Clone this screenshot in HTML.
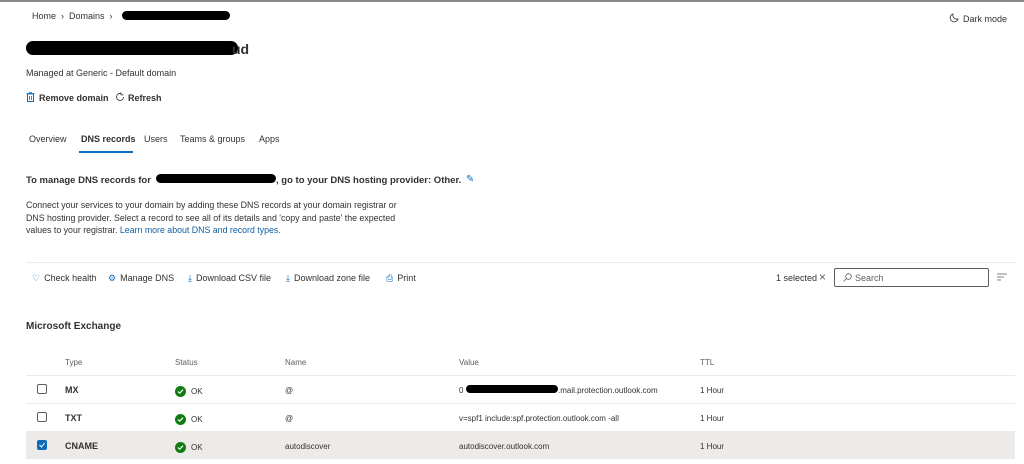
<!DOCTYPE html>
<html><head><meta charset="utf-8"><style>
*{margin:0;padding:0;box-sizing:border-box}
body{width:1024px;height:464px;overflow:hidden;background:#fff;font-family:"Liberation Sans",sans-serif;color:#323130;position:relative;font-size:9px}
.a{position:absolute;white-space:nowrap}
.blk{position:absolute;background:#000;border-radius:6px}
.hl{position:absolute;left:26px;width:989px;height:1px;background:#edebe9}
.cb{position:absolute;left:37px;width:10px;height:10px;border:1px solid #605e5c;border-radius:2px;background:#fff}
.ok{position:absolute;width:11px;height:11px;border-radius:50%;background:#107c10}
.ok svg{position:absolute;left:2px;top:2px}
.ic{color:#0f6cbd;margin-right:4px}
</style></head><body>
<div style="position:absolute;left:0;top:0;width:1024px;height:2px;background:#8a8886"></div>
<div class="a" style="left:32px;top:11px;font-size:9px;color:#323130">Home &nbsp;›&nbsp; Domains &nbsp;›</div>
<div class="blk" style="left:122px;top:11px;width:108px;height:9px"></div>
<div class="a" style="left:949px;top:13px;font-size:9px"><svg width="10" height="10" viewBox="0 0 10 10" style="vertical-align:-1px;margin-right:4px"><path d="M4 1a4 4 0 1 0 5 5A4 4 0 0 1 4 1z" fill="none" stroke="#323130" stroke-width="0.8"/></svg>Dark mode</div>
<div class="blk" style="left:26px;top:41px;width:212px;height:14px;border-radius:7px"></div>
<div class="a" style="left:232px;top:41px;font-size:14px;font-weight:bold">ud</div>
<div class="a" style="left:26px;top:68px;font-size:9px">Managed at Generic - Default domain</div>
<div class="a" style="left:26px;top:92px;font-size:9px;font-weight:bold"><svg width="9" height="10" viewBox="0 0 9 10" style="vertical-align:-1px;margin-right:4px"><rect x="1.5" y="2" width="6" height="7.5" fill="none" stroke="#0f6cbd"/><path d="M0.5 1.5h8M3 0.5h3M3.5 4v4M5.5 4v4" stroke="#0f6cbd" stroke-width="0.8"/></svg>Remove domain</div>
<div class="a" style="left:115px;top:92px;font-size:9px;font-weight:bold"><svg width="10" height="10" viewBox="0 0 10 10" style="vertical-align:-1px;margin-right:3px"><path d="M8.5 5A3.5 3.5 0 1 1 6 1.6" fill="none" stroke="#323130" stroke-width="0.8"/><path d="M6 0.3v2.6h2.5" fill="none" stroke="#323130" stroke-width="0.8"/></svg>Refresh</div>
<div class="a" style="left:29px;top:134px;font-size:9px">Overview</div>
<div class="a" style="left:81px;top:134px;font-size:9px;font-weight:bold">DNS records</div>
<div style="position:absolute;left:79px;top:151px;width:54px;height:2px;background:#0f6cbd"></div>
<div class="a" style="left:144px;top:134px;font-size:9px">Users</div>
<div class="a" style="left:180px;top:134px;font-size:9px">Teams &amp; groups</div>
<div class="a" style="left:259px;top:134px;font-size:9px">Apps</div>
<div class="a" style="left:26px;top:175px;font-size:9.5px;font-weight:bold">To manage DNS records for</div>
<div class="blk" style="left:156px;top:174px;width:120px;height:9px"></div>
<div class="a" style="left:276px;top:175px;font-size:9.5px;font-weight:bold">, go to your DNS hosting provider: Other.</div>
<div class="a" style="left:466px;top:174px;font-size:10px;color:#0f6cbd">✎</div>
<div class="a" style="left:26px;top:199px;font-size:8.8px;line-height:12.5px;color:#323130">Connect your services to your domain by adding these DNS records at your domain registrar or<br>DNS hosting provider. Select a record to see all of its details and 'copy and paste' the expected<br>values to your registrar. <span style="color:#115ea3">Learn more about DNS and record types.</span></div>
<div class="hl" style="top:262px"></div>
<div class="a" style="left:32px;top:273px;font-size:9px"><span class="ic">♡</span>Check health</div>
<div class="a" style="left:108px;top:273px;font-size:9px"><span class="ic">⚙</span>Manage DNS</div>
<div class="a" style="left:188px;top:273px;font-size:9px"><span class="ic">⤓</span>Download CSV file</div>
<div class="a" style="left:286px;top:273px;font-size:9px"><span class="ic">⤓</span>Download zone file</div>
<div class="a" style="left:386px;top:273px;font-size:9px"><span class="ic">⎙</span>Print</div>
<div class="a" style="left:776px;top:273px;font-size:9px">1 selected</div>
<div class="a" style="left:819px;top:270px;font-size:12px;color:#605e5c">×</div>
<div style="position:absolute;left:834px;top:268px;width:155px;height:19px;border:1px solid #605e5c;border-radius:2px"></div>
<div class="a" style="left:843px;top:273px;font-size:9px;color:#605e5c"><svg width="9" height="9" viewBox="0 0 9 9" style="vertical-align:-1px;margin-right:3px"><circle cx="5.5" cy="3.5" r="2.8" fill="none" stroke="#605e5c" stroke-width="0.8"/><path d="M3.5 5.5L0.5 8.5" stroke="#605e5c" stroke-width="0.8"/></svg>Search</div>
<svg class="a" style="left:997px;top:273px" width="10" height="8" viewBox="0 0 10 8"><path d="M0 1h10M0 4h7M0 7h4" stroke="#605e5c" stroke-width="0.8"/></svg>
<div class="a" style="left:26px;top:321px;font-size:10px;font-weight:bold">Microsoft Exchange</div>
<div class="a" style="left:65px;top:358px;font-size:8px;color:#605e5c">Type</div>
<div class="a" style="left:175px;top:358px;font-size:8px;color:#605e5c">Status</div>
<div class="a" style="left:285px;top:358px;font-size:8px;color:#605e5c">Name</div>
<div class="a" style="left:459px;top:358px;font-size:8px;color:#605e5c">Value</div>
<div class="a" style="left:700px;top:358px;font-size:8px;color:#605e5c">TTL</div>
<div class="hl" style="top:375px"></div>
<div class="hl" style="top:403px"></div>
<div style="position:absolute;left:26px;top:431px;width:989px;height:28px;background:#edebe9"></div>
<div class="cb" style="top:384px"></div>
<div class="cb" style="top:412px"></div>
<div class="cb" style="top:440px;background:#0f6cbd;border-color:#0f6cbd"><svg width="8" height="8" viewBox="0 0 8 8" style="position:absolute;left:0;top:0"><path d="M1.5 4l2 2 3-4" fill="none" stroke="#fff" stroke-width="1"/></svg></div>
<div class="a" style="left:65px;top:385px;font-size:9px;font-weight:bold">MX</div>
<div class="a" style="left:65px;top:413px;font-size:9px;font-weight:bold">TXT</div>
<div class="a" style="left:65px;top:441px;font-size:9px;font-weight:bold">CNAME</div>
<div class="ok" style="left:175px;top:386px"><svg width="7" height="7" viewBox="0 0 7 7"><path d="M1 3.5l1.7 1.7 3.3-3.5" fill="none" stroke="#fff" stroke-width="1.2"/></svg></div>
<div class="ok" style="left:175px;top:414px"><svg width="7" height="7" viewBox="0 0 7 7"><path d="M1 3.5l1.7 1.7 3.3-3.5" fill="none" stroke="#fff" stroke-width="1.2"/></svg></div>
<div class="ok" style="left:175px;top:442px"><svg width="7" height="7" viewBox="0 0 7 7"><path d="M1 3.5l1.7 1.7 3.3-3.5" fill="none" stroke="#fff" stroke-width="1.2"/></svg></div>
<div class="a" style="left:191px;top:387px;font-size:8px">OK</div>
<div class="a" style="left:191px;top:415px;font-size:8px">OK</div>
<div class="a" style="left:191px;top:443px;font-size:8px">OK</div>
<div class="a" style="left:285px;top:386px;font-size:8px">@</div>
<div class="a" style="left:285px;top:414px;font-size:8px">@</div>
<div class="a" style="left:285px;top:442px;font-size:8px">autodiscover</div>
<div class="a" style="left:459px;top:386px;font-size:8px">0</div>
<div class="blk" style="left:466px;top:385px;width:92px;height:8px"></div>
<div class="a" style="left:558px;top:386px;font-size:8px">.mail.protection.outlook.com</div>
<div class="a" style="left:459px;top:414px;font-size:8px">v=spf1 include:spf.protection.outlook.com -all</div>
<div class="a" style="left:459px;top:442px;font-size:8px">autodiscover.outlook.com</div>
<div class="a" style="left:700px;top:386px;font-size:8px">1 Hour</div>
<div class="a" style="left:700px;top:414px;font-size:8px">1 Hour</div>
<div class="a" style="left:700px;top:442px;font-size:8px">1 Hour</div>
</body></html>
